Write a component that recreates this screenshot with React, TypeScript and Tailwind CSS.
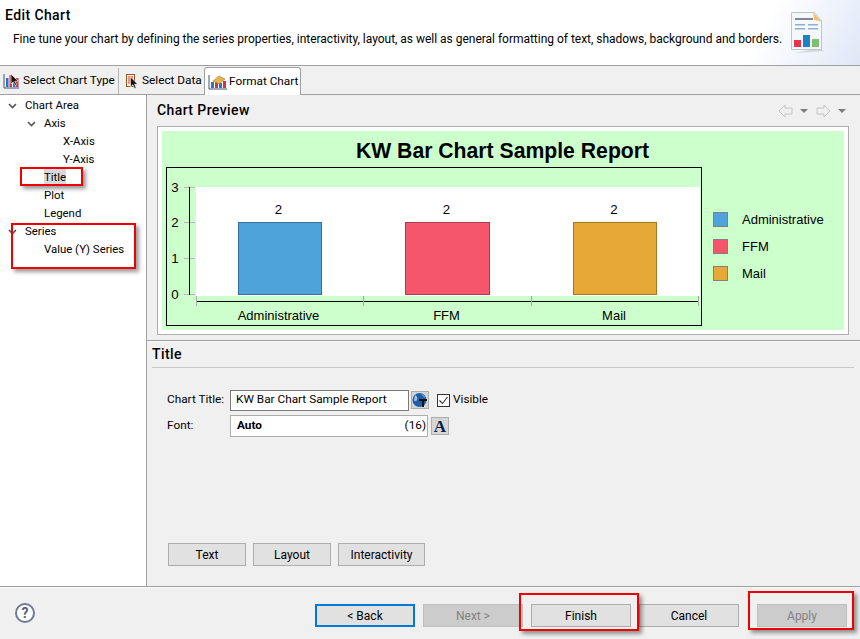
const FONT = "font-['Roboto',sans-serif]";

const TREE = [
  { label: "Chart Area", indent: 25, open: true },
  { label: "Axis", indent: 44, open: true },
  { label: "X-Axis", indent: 63 },
  { label: "Y-Axis", indent: 63 },
  { label: "Title", indent: 44, selected: true },
  { label: "Plot", indent: 44 },
  { label: "Legend", indent: 44 },
  { label: "Series", indent: 25, open: true },
  { label: "Value (Y) Series", indent: 44 },
];

const BARS = [
  { x: 238.5, w: 83, fill: "#4fa3db", stroke: "#3a7299", label: "Administrative", cx: 278.5, tx: 278.5 },
  { x: 405.5, w: 84, fill: "#f5566c", stroke: "#ad3c4c", label: "FFM", cx: 446.5, tx: 446.5 },
  { x: 573.5, w: 83, fill: "#e6a935", stroke: "#a27725", label: "Mail", cx: 614, tx: 614 },
];

function Cursor({ x, y }: { x: number; y: number }) {
  return (
    <path
      d={`M${x} ${y}v10l2.4-2.2 1.6 3.6 1.6-.7-1.6-3.5h3.2z`}
      fill="#111"
      stroke="#fff"
      strokeWidth="0.6"
    />
  );
}

function BarsIcon({ cursor }: { cursor?: boolean }) {
  return (
    <svg width="17" height="16" viewBox="0 0 17 16" className="shrink-0">
      <path d="M1 1v14h15" fill="none" stroke="#39557c" strokeWidth="1" />
      <rect x="3" y="5" width="2.5" height="9" fill="#3a6fb5" />
      <rect x="6.5" y="2" width="2.5" height="12" fill="#c8384a" />
      <rect x="10" y="7" width="2.5" height="7" fill="#3a6fb5" />
      <rect x="13" y="5" width="2.5" height="9" fill="#c8384a" />
      {cursor && <Cursor x={8} y={1} />}
    </svg>
  );
}

function DataIcon() {
  return (
    <svg width="15" height="16" viewBox="0 0 15 16" className="shrink-0">
      <rect x="1.5" y="1.5" width="8" height="12" fill="#fff4e0" stroke="#a5531f" />
      <path d="M3 4h5M3 6h5M3 8h3M3 10h3" stroke="#d0392b" strokeWidth="1" />
      <Cursor x={5.5} y={4} />
    </svg>
  );
}

function FormatIcon() {
  return (
    <svg width="20" height="16" viewBox="0 0 20 16" className="shrink-0">
      <path d="M1 1v14h18" fill="none" stroke="#39557c" />
      <rect x="3" y="8" width="3" height="6" fill="#3a6fb5" />
      <rect x="7" y="6" width="3" height="8" fill="#c8384a" />
      <rect x="11" y="9" width="3" height="5" fill="#3a6fb5" />
      <rect x="15" y="7" width="3" height="7" fill="#c8384a" />
      <path d="M5 7l6-5 6 3-6 5z" fill="#e3b54a" stroke="#9a7a2a" strokeWidth="0.6" />
    </svg>
  );
}

function ReportIcon() {
  return (
    <svg width="34" height="42" viewBox="0 0 34 42" className="shrink-0">
      <path d="M4 42l30-2-4-3z" fill="#9aa3b0" opacity="0.35" />
      <path d="M1.5 1.5h23l7 8v29h-30z" fill="#f5f8fa" stroke="#bcc7c2" />
      <path d="M23 1.5l8.5 9-7.5-1.5z" fill="#f0bf77" />
      <rect x="5" y="7" width="18" height="2" fill="#7d8898" />
      <rect x="5" y="13" width="10" height="1.5" fill="#8fb0cc" />
      <rect x="18" y="13" width="10" height="1.5" fill="#8fb0cc" />
      <rect x="5" y="17" width="10" height="1.5" fill="#8fb0cc" />
      <rect x="18" y="17" width="10" height="1.5" fill="#8fb0cc" />
      <rect x="4" y="29" width="7" height="7" fill="#e8344f" />
      <rect x="13" y="24" width="7" height="12" fill="#1f80c4" />
      <rect x="22" y="28" width="7" height="8" fill="#82bd74" />
    </svg>
  );
}

function Chevron() {
  return (
    <svg width="9" height="6" viewBox="0 0 9 6" className="absolute top-[6px]" style={{ left: -17 }}>
      <path d="M1 1l3.5 3.5L8 1" fill="none" stroke="#555" strokeWidth="1.6" />
    </svg>
  );
}

function NavArrows() {
  return (
    <div className="flex items-center">
      <svg width="15" height="14" viewBox="0 0 15 14" className="mr-[7px]">
        <path d="M7 1L1 7l6 6V10h7V4H7z" fill="#f0f0f0" stroke="#c4c4c4" />
      </svg>
      <div className="w-0 h-0 border-x-[4px] border-x-transparent border-t-[4px] border-t-[#7c7c7c] mr-[8px]" />
      <svg width="15" height="14" viewBox="0 0 15 14" className="mr-[7px]">
        <path d="M8 1l6 6-6 6V10H1V4h7z" fill="#f0f0f0" stroke="#c4c4c4" />
      </svg>
      <div className="w-0 h-0 border-x-[4px] border-x-transparent border-t-[4px] border-t-[#7c7c7c]" />
    </div>
  );
}

function ChartSvg() {
  return (
    <svg width="682" height="199" viewBox="162 131 682 199" className="block">
      <rect x="162" y="131" width="682" height="199" fill="#ccffcc" />
      <text x="502.5" y="158" textAnchor="middle" fontFamily="Liberation Sans" fontWeight="700" fontSize="21.2" fill="#000">
        KW Bar Chart Sample Report
      </text>
      <rect x="166.5" y="167.5" width="535" height="158" fill="none" stroke="#000" />
      <rect x="196" y="187" width="504" height="109" fill="#fff" />
      <path d="M184 187.5h11M184 222.5h11M184 258.5h11M184 294.5h11" stroke="#b8b8b8" />
      <path d="M189.5 187v108" stroke="#000" />
      <path d="M196.5 301.5h502" stroke="#000" />
      <path d="M196.5 296v10M363.5 296v10M531.5 296v10M698.5 296v10" stroke="#a8a8a8" />
      {[
        ["3", 191.5],
        ["2", 226.5],
        ["1", 262.5],
        ["0", 299],
      ].map(([t, y]) => (
        <text key={t} x="175" y={y} textAnchor="middle" fontFamily="Liberation Sans" fontSize="13.3" fill="#000">
          {t}
        </text>
      ))}
      {BARS.map((b) => (
        <g key={b.label}>
          <rect x={b.x} y="222.5" width={b.w} height="72" fill={b.fill} stroke={b.stroke} />
          <text x={b.cx} y="214" textAnchor="middle" fontFamily="Liberation Sans" fontSize="13.3" fill="#000">
            2
          </text>
          <text x={b.tx} y="320" textAnchor="middle" fontFamily="Liberation Sans" fontSize="13" fill="#000">
            {b.label}
          </text>
        </g>
      ))}
      {BARS.map((b, i) => (
        <g key={b.label}>
          <rect x="713.5" y={212.5 + i * 27} width="14" height="14" fill={b.fill} stroke="#808080" />
          <text x="742" y={224 + i * 27} fontFamily="Liberation Sans" fontSize="13" fill="#000">
            {b.label}
          </text>
        </g>
      ))}
    </svg>
  );
}

function Btn({ label, w, variant }: { label: string; w: string; variant?: "focus" | "disabled" }) {
  const tone =
    variant === "focus"
      ? "border-2 border-[#0078d7] bg-[#e1e1e1] text-black"
      : variant === "disabled"
        ? "border border-[#bfbfbf] bg-[#cccccc] text-[#838383]"
        : "border border-[#adadad] bg-[#e1e1e1] text-black";
  return <div className={`${w} h-[23px] flex items-center justify-center text-[12px] ${tone}`}>{label}</div>;
}

function RedBox({ className }: { className: string }) {
  return <div className={`absolute border-[2px] border-[#f00000] shadow-[3px_3px_4px_rgba(0,0,0,0.4)] ${className}`} />;
}

export default function App() {
  return (
    <div className={`relative w-[860px] h-[639px] flex flex-col bg-[#f0f0f0] text-[11.8px] text-black overflow-hidden ${FONT}`}>
      {/* banner */}
      <div className="h-[66px] shrink-0 flex justify-between border-b border-[#a0a0a0] bg-[linear-gradient(118deg,#ffffff_87%,#dfe7f7_100%)]">
        <div className="min-w-0 pl-[5px] pt-[6px]">
          <div className="text-[14px] leading-[18px] font-medium tracking-[0.4px]">Edit Chart</div>
          <div className="pl-[8px] mt-[6px] text-[12px] leading-[18px] whitespace-nowrap tracking-[-0.02px]">
            Fine tune your chart by defining the series properties, interactivity, layout, as well as general formatting of text, shadows, background and borders.
          </div>
        </div>
        <div className="shrink-0 pr-[36px] pt-[11px]">
          <ReportIcon />
        </div>
      </div>

      {/* tabs */}
      <div className="h-[29px] shrink-0 flex items-end border-b border-[#a0a0a0] pt-[2px]">
        <div className="h-full w-[119px] flex items-center gap-[3px] pl-[3px] border-r border-[#b5b5b5]">
          <BarsIcon cursor />
          <span className="whitespace-nowrap">Select Chart Type</span>
        </div>
        <div className="h-full w-[85px] flex items-center gap-[2px] pl-[6px]">
          <DataIcon />
          <span className="whitespace-nowrap">Select Data</span>
        </div>
        <div className="h-[28px] -mb-px w-[97px] flex items-center gap-[1px] pl-[3px] bg-white border border-b-0 border-[#a0a0a0] rounded-t-[3px]">
          <FormatIcon />
          <span className="whitespace-nowrap">Format Chart</span>
        </div>
      </div>

      {/* main */}
      <div className="h-[492px] shrink-0 flex border-b border-[#a0a0a0]">
        <div className="w-[147px] shrink-0 bg-white border-r border-[#a0a0a0] pt-px text-[11.4px]">
          {TREE.map((row) => (
            <div key={row.label} className="h-[18px] flex items-center" style={{ paddingLeft: row.indent }}>
              <span className={`relative leading-[16px] whitespace-nowrap ${row.selected ? "bg-[#d9d9d9]" : ""}`}>
                {row.open && <Chevron />}
                {row.label}
              </span>
            </div>
          ))}
        </div>

        <div className="flex-1 flex flex-col min-w-0">
          <div className="h-[246px] shrink-0 border-b border-[#a0a0a0] pl-[10px] pr-[11px]">
            <div className="h-[31px] flex items-center justify-between pr-[3px]">
              <span className="text-[14px] font-medium tracking-[0.4px]">Chart Preview</span>
              <NavArrows />
            </div>
            <div className="w-[692px] h-[209px] border border-[#adadad] bg-white p-[4px]">
              <ChartSvg />
            </div>
          </div>

          <div className="flex-1 flex flex-col pl-[5px] pr-[6px] border-t border-[#f8f8f8]">
            <div className="h-[26px] border-b border-[#c8c8c8] flex items-center text-[14px] font-medium tracking-[0.4px]">Title</div>

            <div className="pl-[15px] pt-[21px]">
              <div className="flex items-center h-[22px]">
                <span className="w-[63px] whitespace-nowrap">Chart Title:</span>
                <div className="w-[179px] h-[21px] px-[5px] flex items-center border border-[#7a7a7a] bg-white whitespace-nowrap">
                  KW Bar Chart Sample Report
                </div>
                <div className="ml-[2px] w-[18px] h-[18px] flex items-center justify-center bg-[#d6d6d6] border border-[#adadad]">
                  <svg width="16" height="16" viewBox="0 0 16 16">
                    <circle cx="7.5" cy="8" r="7" fill="#1f5fa8" />
                    <path d="M3 3c2 1 3 3 2 5S2 9 2 8M8 1c2 2 5 2 5 5" fill="#9cc3e6" />
                    <path d="M7 7h8v2h-3v6h-2V9H7z" fill="#111" />
                  </svg>
                </div>
                <div className="ml-[8px] w-[13px] h-[13px] border border-[#333] bg-white flex items-center justify-center">
                  <svg width="11" height="11" viewBox="0 0 11 11">
                    <path d="M1.5 5.5l3 3 5-6.5" fill="none" stroke="#333" strokeWidth="1.1" />
                  </svg>
                </div>
                <span className="ml-[3px]">Visible</span>
              </div>
              <div className="flex items-center h-[22px] mt-[4px]">
                <span className="w-[63px]">Font:</span>
                <div className="w-[198px] h-[22px] pl-[6px] pr-[1px] flex items-center justify-between border border-[#adadad] bg-white">
                  <span className="font-bold">Auto</span>
                  <span>(16)</span>
                </div>
                <div className="ml-[3px] w-[18px] h-[18px] flex items-center justify-center bg-[#d6d6d6] border border-[#adadad] font-['Liberation_Serif',serif] font-bold text-[17px] leading-none text-[#10203a]">
                  A
                </div>
              </div>
            </div>

            <div className="mt-[106px] pl-[16px] flex gap-[7px]">
              <Btn label="Text" w="w-[78px]" />
              <Btn label="Layout" w="w-[78px]" />
              <Btn label="Interactivity" w="w-[87px]" />
            </div>
          </div>
        </div>
      </div>

      {/* footer */}
      <div className="flex-1 flex items-start pt-[16px] pl-[15px] pr-[13px] border-t border-[#f8f8f8]">
        <div className="w-[20px] h-[20px] mt-[-1px] rounded-full border-2 border-[#6d7c96] bg-white flex items-center justify-center text-[14px] leading-none font-bold text-[#55627c]">
          ?
        </div>
        <div className="flex-1 flex justify-end gap-[8px]">
          <Btn label="< Back" w="w-[100px]" variant="focus" />
          <Btn label="Next >" w="w-[100px]" variant="disabled" />
          <Btn label="Finish" w="w-[100px]" />
          <Btn label="Cancel" w="w-[100px]" />
          <div className="ml-[10px]">
            <Btn label="Apply" w="w-[90px]" variant="disabled" />
          </div>
        </div>
      </div>

      {/* red marks drawn on top of the screenshot */}
      <RedBox className="left-[20px] top-[167px] w-[63px] h-[19px]" />
      <RedBox className="left-[11px] top-[223px] w-[125px] h-[46px]" />
      <RedBox className="left-[519px] top-[593px] w-[120px] h-[38px]" />
      <RedBox className="left-[748px] top-[591px] w-[106px] h-[39px]" />
    </div>
  );
}
